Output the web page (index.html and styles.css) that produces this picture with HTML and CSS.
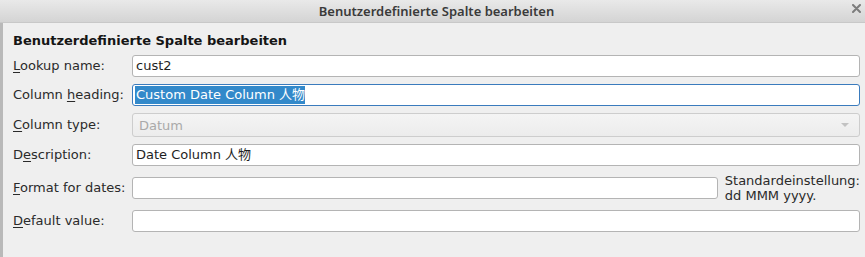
FILE: index.html
```html
<!DOCTYPE html>
<html>
<head>
<meta charset="utf-8">
<link rel="stylesheet" href="styles.css">
</head>
<body>
<div class="window">
  <div class="titlebar">
    <span class="title">Benutzerdefinierte Spalte bearbeiten</span>
    <svg class="close" width="9" height="9" viewBox="0 0 9 9"><path d="M1 1 L8 8 M8 1 L1 8" stroke="#7c7c7c" stroke-width="2" stroke-linecap="round"/></svg>
  </div>
  <div class="dialog">
    <h1 class="heading">Benutzerdefinierte Spalte bearbeiten</h1>
    <div class="form">
      <label class="label"><u>L</u>ookup name:</label>
      <div class="input">cust2</div>

      <label class="label">Column <u>h</u>eading:</label>
      <div class="input focused"><span class="sel">Custom Date Column 人物</span></div>

      <label class="label"><u>C</u>olumn type:</label>
      <div class="combo"><span>Datum</span><span class="arrow"></span></div>

      <label class="label">D<u>e</u>scription:</label>
      <div class="input">Date Column 人物</div>

      <label class="label"><u>F</u>ormat for dates:</label>
      <div class="format-row">
        <div class="input grow"></div>
        <div class="hint">Standardeinstellung:<br>dd MMM yyyy.</div>
      </div>

      <label class="label"><u>D</u>efault value:</label>
      <div class="input"></div>
    </div>
  </div>
</div>
</body>
</html>
```
FILE: styles.css
```css
html, body {
  margin: 0;
  padding: 0;
}
body {
  width: 865px;
  height: 257px;
  overflow: hidden;
  background: #efefef;
  font-family: "DejaVu Sans", "Noto Sans CJK SC", sans-serif;
  font-size: 13px;
  color: #1e1e1e;
}
.window {
  height: 257px;
  display: flex;
  flex-direction: column;
}
.titlebar {
  height: 22px;
  flex: none;
  background: linear-gradient(#e9e9e9, #d4d4d4);
  border-bottom: 1px solid #c8c8c8;
  display: flex;
  align-items: center;
  justify-content: center;
  position: relative;
}
.title {
  font-family: "Noto Sans", "DejaVu Sans", sans-serif;
  font-weight: 600;
  font-size: 13px;
  color: #3a3a3a;
  margin-left: 8px;
}
.close {
  position: absolute;
  right: 4px;
  top: 4px;
}
.dialog {
  flex: 1;
  border-left: 3px solid #b9b9b9;
  padding: 10px 5px 0 10px;
}
.heading {
  margin: 0 0 6px 0;
  font-size: 13px;
  font-weight: bold;
  line-height: 16px;
  color: #151515;
}
.form {
  display: grid;
  grid-template-columns: 119px 1fr;
  row-gap: 7px;
  align-items: center;
}
.label {
  line-height: 16px;
  color: #2a2a2a;
}
.label u {
  text-decoration-thickness: 1px;
  text-underline-offset: 2px;
}
.input {
  height: 20px;
  box-sizing: content-box;
  background: #fff;
  border: 1px solid #b4b4b4;
  border-radius: 3px;
  padding: 0 3px;
  line-height: 20px;
  color: #1e1e1e;
  white-space: nowrap;
  overflow: hidden;
}
.input.focused {
  border-color: #3a7bbd;
  padding-left: 2px;
}
.sel {
  background: #3389ca;
  color: #fff;
  display: inline-block;
  line-height: 18px;
  padding: 0 0 0 1px;
  margin-top: 1px;
}
.combo {
  height: 22px;
  border: 1px solid #cdcdcd;
  border-radius: 3px;
  background: linear-gradient(#f4f4f4, #ececec);
  color: #a9a9a9;
  display: flex;
  align-items: center;
  justify-content: space-between;
  padding: 0 10px 0 6px;
}
.arrow {
  width: 0;
  height: 0;
  border-left: 4px solid transparent;
  border-right: 4px solid transparent;
  border-top: 4px solid #c2c2c2;
}
.format-row {
  display: flex;
  align-items: center;
  gap: 7px;
}
.grow {
  flex: 1;
}
.hint {
  line-height: 15px;
  color: #2a2a2a;
  white-space: nowrap;
}
```
